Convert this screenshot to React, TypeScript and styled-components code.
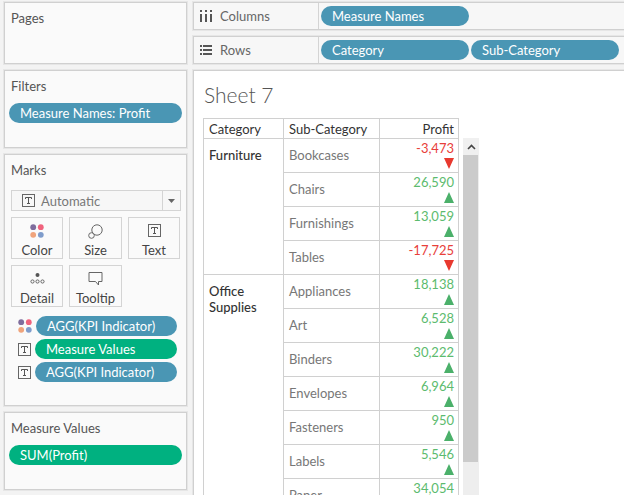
import { createGlobalStyle, styled } from 'styled-components'

type Tone = 'blue' | 'green'

const rows = [
  {
    category: ['Furniture'],
    items: [
      ['Bookcases', '-3,473'],
      ['Chairs', '26,590'],
      ['Furnishings', '13,059'],
      ['Tables', '-17,725'],
    ],
  },
  {
    category: ['Office', 'Supplies'],
    items: [
      ['Appliances', '18,138'],
      ['Art', '6,528'],
      ['Binders', '30,222'],
      ['Envelopes', '6,964'],
      ['Fasteners', '950'],
      ['Labels', '5,546'],
      ['Paper', '34,054'],
    ],
  },
]

function TextIcon({ size = 13 }: { size?: number }) {
  return (
    <svg width={size} height={size} viewBox="0 0 13 13" fill="none">
      <rect x="0.5" y="0.5" width="12" height="12" stroke="#666" />
      <path d="M3.5 5V3.5H9.5V5M6.5 3.5V9.5M5 9.5H8" stroke="#555" />
    </svg>
  )
}

function DotsIcon({ size = 14 }: { size?: number }) {
  return (
    <svg width={size} height={size} viewBox="0 0 14 14">
      <circle cx="3.2" cy="3.2" r="2.9" fill="#7f6d9d" />
      <circle cx="10.8" cy="3.2" r="2.9" fill="#f0637d" />
      <circle cx="3.2" cy="10.8" r="2.9" fill="#f0a47c" />
      <circle cx="10.8" cy="10.8" r="2.9" fill="#7f9ccb" />
    </svg>
  )
}

function SizeIcon() {
  return (
    <svg width="15" height="15" viewBox="0 0 15 15" fill="none" stroke="#666">
      <circle cx="9" cy="6" r="5.2" fill="#fafafa" />
      <circle cx="3.5" cy="11.5" r="2.8" fill="#fafafa" />
    </svg>
  )
}

function DetailIcon() {
  return (
    <svg width="15" height="13" viewBox="0 0 15 13" fill="none">
      <circle cx="7.5" cy="3" r="2" fill="#555" />
      <circle cx="2.5" cy="9.5" r="1.6" stroke="#666" />
      <circle cx="7.5" cy="9.5" r="1.6" stroke="#666" />
      <circle cx="12.5" cy="9.5" r="1.6" stroke="#666" />
    </svg>
  )
}

function TooltipIcon() {
  return (
    <svg width="15" height="14" viewBox="0 0 15 14" fill="none">
      <path d="M1 .5H14V9.5H10.5V13L7.5 9.5H1Z" stroke="#666" />
    </svg>
  )
}

export default function App() {
  return (
    <Page>
      <GlobalStyle />
      <Sidebar>
        <Card $height={62}>
          <CardTitle>Pages</CardTitle>
        </Card>
        <Card $height={78}>
          <CardTitle>Filters</CardTitle>
          <CardPill $tone="blue">Measure Names: Profit</CardPill>
        </Card>
        <Card $height={252}>
          <CardTitle>Marks</CardTitle>
          <MarkType>
            <MarkTypeLabel>
              <TextIcon />
              Automatic
            </MarkTypeLabel>
            <MarkTypeCaret>
              <svg width="7" height="4" viewBox="0 0 7 4">
                <path d="M0 0H7L3.5 4Z" fill="#666" />
              </svg>
            </MarkTypeCaret>
          </MarkType>
          <MarkButtons>
            <MarkButton>
              <DotsIcon />
              <span>Color</span>
            </MarkButton>
            <MarkButton>
              <SizeIcon />
              <span>Size</span>
            </MarkButton>
            <MarkButton>
              <TextIcon />
              <span>Text</span>
            </MarkButton>
            <MarkButton>
              <DetailIcon />
              <span>Detail</span>
            </MarkButton>
            <MarkButton>
              <TooltipIcon />
              <span>Tooltip</span>
            </MarkButton>
          </MarkButtons>
          <MarkFields>
            <MarkField>
              <DotsIcon />
              <Pill $tone="blue">AGG(KPI Indicator)</Pill>
            </MarkField>
            <MarkField>
              <TextIcon />
              <Pill $tone="green">Measure Values</Pill>
            </MarkField>
            <MarkField>
              <TextIcon />
              <Pill $tone="blue">AGG(KPI Indicator)</Pill>
            </MarkField>
          </MarkFields>
        </Card>
        <Card $height={78}>
          <CardTitle>Measure Values</CardTitle>
          <CardPill $tone="green">SUM(Profit)</CardPill>
        </Card>
      </Sidebar>

      <Main>
        <Shelf>
          <ShelfLabel>
            <svg width="12" height="12" viewBox="0 0 12 12" fill="#555">
              <path d="M0 0H2V2H0ZM5 0H7V2H5ZM10 0H12V2H10ZM0 4H2V12H0ZM5 4H7V12H5ZM10 4H12V12H10Z" />
            </svg>
            Columns
          </ShelfLabel>
          <ShelfPills>
            <ShelfPill $tone="blue">Measure Names</ShelfPill>
          </ShelfPills>
        </Shelf>
        <Shelf>
          <ShelfLabel>
            <svg width="12" height="10" viewBox="0 0 12 10" fill="#555">
              <path d="M0 0H2V2H0ZM3 0H12V2H3ZM0 4H2V6H0ZM3 4H12V6H3ZM0 8H2V10H0ZM3 8H12V10H3Z" />
            </svg>
            Rows
          </ShelfLabel>
          <ShelfPills>
            <ShelfPill $tone="blue">Category</ShelfPill>
            <ShelfPill $tone="blue">Sub-Category</ShelfPill>
          </ShelfPills>
        </Shelf>
        <View>
          <SheetTitle>Sheet 7</SheetTitle>
          <ViewBody>
            <Table>
              <HeaderCell>Category</HeaderCell>
              <HeaderCell>Sub-Category</HeaderCell>
              <HeaderCell $right>Profit</HeaderCell>
              {rows.map((group) => (
                <Group key={group.category.join(' ')}>
                  <CategoryCell $span={group.items.length}>
                    {group.category.map((line) => (
                      <div key={line}>{line}</div>
                    ))}
                  </CategoryCell>
                  {group.items.map(([name, value]) => {
                    const negative = value.startsWith('-')
                    return (
                      <Row key={name}>
                        <NameCell>{name}</NameCell>
                        <ValueCell>
                          <Value $negative={negative}>{value}</Value>
                          <Triangle $negative={negative} />
                        </ValueCell>
                      </Row>
                    )
                  })}
                </Group>
              ))}
            </Table>
            <Scrollbar>
              <ScrollButton>
                <svg width="9" height="6" viewBox="0 0 9 6" fill="none">
                  <path d="M1 5L4.5 1.5L8 5" stroke="#444" strokeWidth="1.6" />
                </svg>
              </ScrollButton>
              <ScrollThumb />
            </Scrollbar>
          </ViewBody>
        </View>
      </Main>
    </Page>
  )
}

const toneColor = (tone: Tone) => (tone === 'blue' ? '#4a96b4' : '#00b180')

const GlobalStyle = createGlobalStyle`
  html, body {
    margin: 0;
    padding: 0;
    background: #f3f3f3;
  }
  * {
    box-sizing: border-box;
  }
`

const Page = styled.div`
  display: flex;
  gap: 6px;
  width: 624px;
  height: 495px;
  padding: 2px 0 0 4px;
  overflow: hidden;
  background: #f3f3f3;
  font-family: Lato, 'Open Sans', sans-serif;
  font-size: 13px;
  line-height: 16px;
  color: #555;
`

const Sidebar = styled.div`
  display: flex;
  flex-direction: column;
  flex: none;
  gap: 6px;
  width: 183px;
`

const Card = styled.div<{ $height: number }>`
  height: ${(props) => props.$height}px;
  padding: 7px 4px 0;
  background: #fafafa;
  border: 1px solid #d0d0d0;
  box-shadow: 0 0 0 1px #e6e6e6;
`

const CardTitle = styled.div`
  padding-left: 2px;
  color: #555;
`

const Pill = styled.div<{ $tone: Tone }>`
  flex: 1;
  height: 20px;
  padding-left: 11px;
  border-radius: 10px;
  background: ${(props) => toneColor(props.$tone)};
  color: #fff;
  line-height: 20px;
  white-space: nowrap;
`

const CardPill = styled(Pill)`
  margin-top: 9px;
`

const MarkType = styled.div`
  display: flex;
  align-items: center;
  height: 21px;
  margin: 12px 1px 0 2px;
  background: #f7f7f7;
  border: 1px solid #d4d4d4;
  color: #777;
`

const MarkTypeLabel = styled.div`
  display: flex;
  flex: 1;
  align-items: center;
  gap: 6px;
  padding-left: 10px;
`

const MarkTypeCaret = styled.div`
  display: flex;
  align-items: center;
  justify-content: center;
  width: 18px;
  height: 100%;
  border-left: 1px solid #d4d4d4;
`

const MarkButtons = styled.div`
  display: grid;
  grid-template-columns: 52px 53px 52px;
  grid-auto-rows: 42px;
  gap: 6px;
  margin: 6px 0 0 2px;
`

const MarkButton = styled.div`
  display: flex;
  flex-direction: column;
  align-items: center;
  justify-content: space-between;
  padding: 6px 0 0;
  border: 1px solid #d4d4d4;
  color: #444;
`

const MarkFields = styled.div`
  display: flex;
  flex-direction: column;
  gap: 3px;
  margin: 9px 5px 0 0;
`

const MarkField = styled.div`
  display: flex;
  align-items: center;
  gap: 4px;
  padding-left: 9px;
`

const Main = styled.div`
  display: flex;
  flex: 1;
  flex-direction: column;
  gap: 6px;
  min-width: 0;
`

const Shelf = styled.div`
  display: flex;
  flex: none;
  height: 28px;
  background: #f7f7f7;
  border: 1px solid #d0d0d0;
  border-right: none;
  box-shadow: 0 0 0 1px #e6e6e6;
`

const ShelfLabel = styled.div`
  display: flex;
  flex: none;
  align-items: center;
  gap: 8px;
  width: 125px;
  padding-left: 6px;
  border-right: 1px solid #d4d4d4;
  color: #666;
`

const ShelfPills = styled.div`
  display: flex;
  align-items: center;
  gap: 2px;
  padding-left: 2px;
`

const ShelfPill = styled(Pill)`
  flex: none;
  width: 148px;
`

const View = styled.div`
  flex: 1;
  min-height: 0;
  padding: 12px 0 0 9px;
  background: #fff;
  border-top: 1px solid #d0d0d0;
  border-left: 1px solid #d0d0d0;
  box-shadow: 0 0 0 1px #e6e6e6;
`

const SheetTitle = styled.div`
  height: 35px;
  padding-left: 1px;
  color: #555;
  font-size: 21px;
  font-weight: 300;
  line-height: 24px;
`

const ViewBody = styled.div`
  display: flex;
  gap: 4px;
  height: 400px;
`

const Table = styled.div`
  display: grid;
  flex: none;
  grid-template-columns: 80px 96px 79px;
  grid-auto-rows: max-content;
  width: 256px;
  border-top: 1px solid #d0d0d0;
  border-left: 1px solid #d0d0d0;
`

const HeaderCell = styled.div<{ $right?: boolean }>`
  height: 20px;
  padding: 0 ${(props) => (props.$right ? '4px' : '5px')};
  border-right: 1px solid #d0d0d0;
  border-bottom: 1px solid #d0d0d0;
  color: #333;
  line-height: 20px;
  text-align: ${(props) => (props.$right ? 'right' : 'left')};
`

const Group = styled.div`
  display: contents;
`

const CategoryCell = styled.div<{ $span: number }>`
  grid-column: 1;
  grid-row: span ${(props) => props.$span};
  padding: 8px 5px 0;
  border-right: 1px solid #d0d0d0;
  border-bottom: 1px solid #d0d0d0;
  color: #333;
  font-weight: 500;
`

const Row = styled.div`
  display: contents;
`

const NameCell = styled.div`
  grid-column: 2;
  height: 34px;
  padding: 0 5px;
  border-right: 1px solid #d0d0d0;
  border-bottom: 1px solid #d0d0d0;
  color: #777;
  line-height: 33px;
`

const ValueCell = styled.div`
  display: flex;
  grid-column: 3;
  flex-direction: column;
  align-items: flex-end;
  height: 34px;
  padding: 1px 4px 0 0;
  border-right: 1px solid #d0d0d0;
  border-bottom: 1px solid #d0d0d0;
`

const Value = styled.div<{ $negative: boolean }>`
  color: ${(props) => (props.$negative ? '#e8403a' : '#5cbb6e')};
`

const Triangle = styled.div<{ $negative: boolean }>`
  width: 0;
  height: 0;
  margin-top: 2px;
  border-right: 5px solid transparent;
  border-left: 5px solid transparent;
  ${(props) =>
    props.$negative ? 'border-top: 11px solid #e8392f;' : 'border-bottom: 11px solid #4bb06a;'}
`

const Scrollbar = styled.div`
  display: flex;
  flex: none;
  flex-direction: column;
  width: 16px;
  margin-top: 20px;
  background: #eeeeee;
`

const ScrollButton = styled.div`
  display: flex;
  align-items: center;
  justify-content: center;
  height: 17px;
  background: #f0f0f0;
`

const ScrollThumb = styled.div`
  width: 15px;
  height: 307px;
  background: #cbcbcb;
`
